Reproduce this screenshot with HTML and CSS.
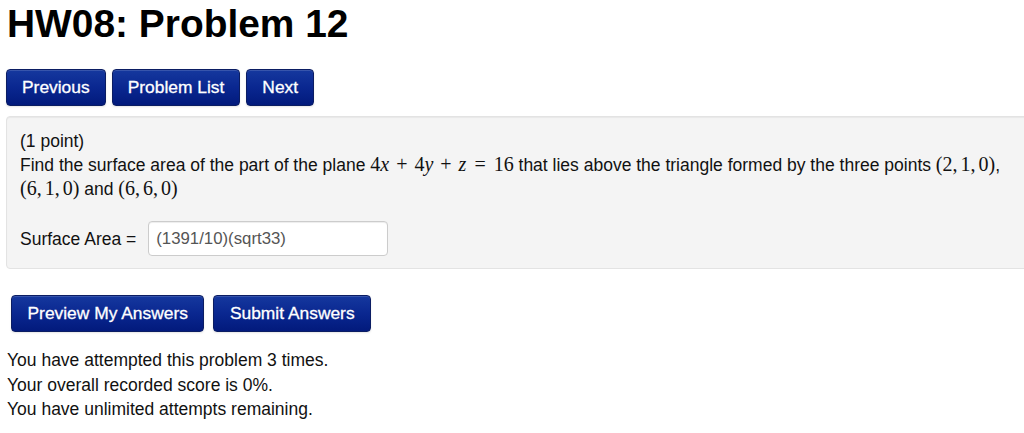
FILE: index.html
```html
<!DOCTYPE html>
<html lang="en">
<head>
<meta charset="utf-8">
<title>HW08: Problem 12</title>
<link rel="stylesheet" href="styles.css">
</head>
<body>
<div class="page">
  <h1 class="title">HW08: Problem 12</h1>
  <nav class="nav">
    <a class="btn btn-nav" href="#">Previous</a>
    <a class="btn btn-nav" href="#">Problem List</a>
    <a class="btn btn-nav" href="#">Next</a>
  </nav>
  <div class="well">
    <div class="problem">
      (1 point)<br>
      Find the surface area of the part of the plane <span class="m">4<i>x</i><span class="op">+</span>4<i>y</i><span class="op">+</span><i>z</i><span class="rel">=</span>16</span> that lies above the triangle formed by the three points <span class="m">(2,<span class="th"></span>1,<span class="th"></span>0)</span>,<br>
      <span class="m">(6,<span class="th"></span>1,<span class="th"></span>0)</span> and <span class="m">(6,<span class="th"></span>6,<span class="th"></span>0)</span>
    </div>
    <div class="answer">
      <label class="answer-label" for="ans">Surface Area =</label>
      <input class="answer-input" id="ans" type="text" value="(1391/10)(sqrt33)">
    </div>
  </div>
  <div class="actions">
    <button class="btn btn-act" type="button">Preview My Answers</button>
    <button class="btn btn-act" type="button">Submit Answers</button>
  </div>
  <div class="status">
    You have attempted this problem 3 times.<br>
    Your overall recorded score is 0%.<br>
    You have unlimited attempts remaining.
  </div>
</div>
</body>
</html>
```
FILE: styles.css
```css
html, body {
  margin: 0;
  padding: 0;
  overflow: hidden;
  background: #fff;
}
body {
  font-family: "Liberation Sans", Arial, sans-serif;
  font-size: 17.5px;
  line-height: 24px;
  color: #111;
}
.page {
  padding: 0 6px;
  width: 1060px;
}
.title {
  margin: 2px 0 0 1px;
  font-size: 38.9px;
  line-height: 44px;
  font-weight: bold;
  color: #000;
}
.nav {
  display: flex;
  gap: 6px;
  margin-top: 23px;
}
.btn {
  display: inline-block;
  box-sizing: border-box;
  height: 37px;
  font-family: "Liberation Sans", Arial, sans-serif;
  font-size: 17.4px;
  line-height: 35px;
  color: #fff;
  -webkit-text-stroke: 0.3px #fff;
  text-decoration: none;
  background: linear-gradient(to bottom, #15389e 0%, #0a2790 50%, #021a7c 100%);
  border: 1px solid #0b1d63;
  border-radius: 4px;
  box-shadow: inset 0 1px 0 rgba(255,255,255,0.15), 0 1px 2px rgba(0,0,0,0.1);
  cursor: pointer;
}
.btn-nav {
  padding: 0 15px;
}
.well {
  margin-top: 10px;
  background: #f4f4f4;
  border: 1px solid #e3e3e3;
  border-radius: 4px;
  box-shadow: inset 0 1px 1px rgba(0,0,0,0.05);
  padding: 12px 13px;
}
.problem {
  line-height: 24px;
}
.m {
  font-family: "Liberation Serif", "Times New Roman", serif;
  font-size: 20px;
  line-height: 1;
  white-space: nowrap;
}
.m i {
  font-style: italic;
}
.op {
  margin: 0 7px;
}
.rel {
  margin: 0 8px;
}
.th {
  display: inline-block;
  width: 3px;
}
.answer {
  display: flex;
  align-items: center;
  margin-top: 20px;
}
.answer-label {
  margin-right: 12px;
}
.answer-input {
  box-sizing: border-box;
  width: 240px;
  height: 35px;
  padding: 0 7px;
  font-family: "Liberation Sans", Arial, sans-serif;
  font-size: 16.8px;
  color: #555;
  background: #fff;
  border: 1px solid #ccc;
  border-radius: 4px;
  box-shadow: inset 0 1px 1px rgba(0,0,0,0.075);
}
.actions {
  display: flex;
  gap: 9px;
  margin: 26px 0 0 5px;
}
.btn-act {
  padding: 0 15.5px;
}
.status {
  margin-top: 16px;
  margin-left: 1px;
  line-height: 24.5px;
}
```
